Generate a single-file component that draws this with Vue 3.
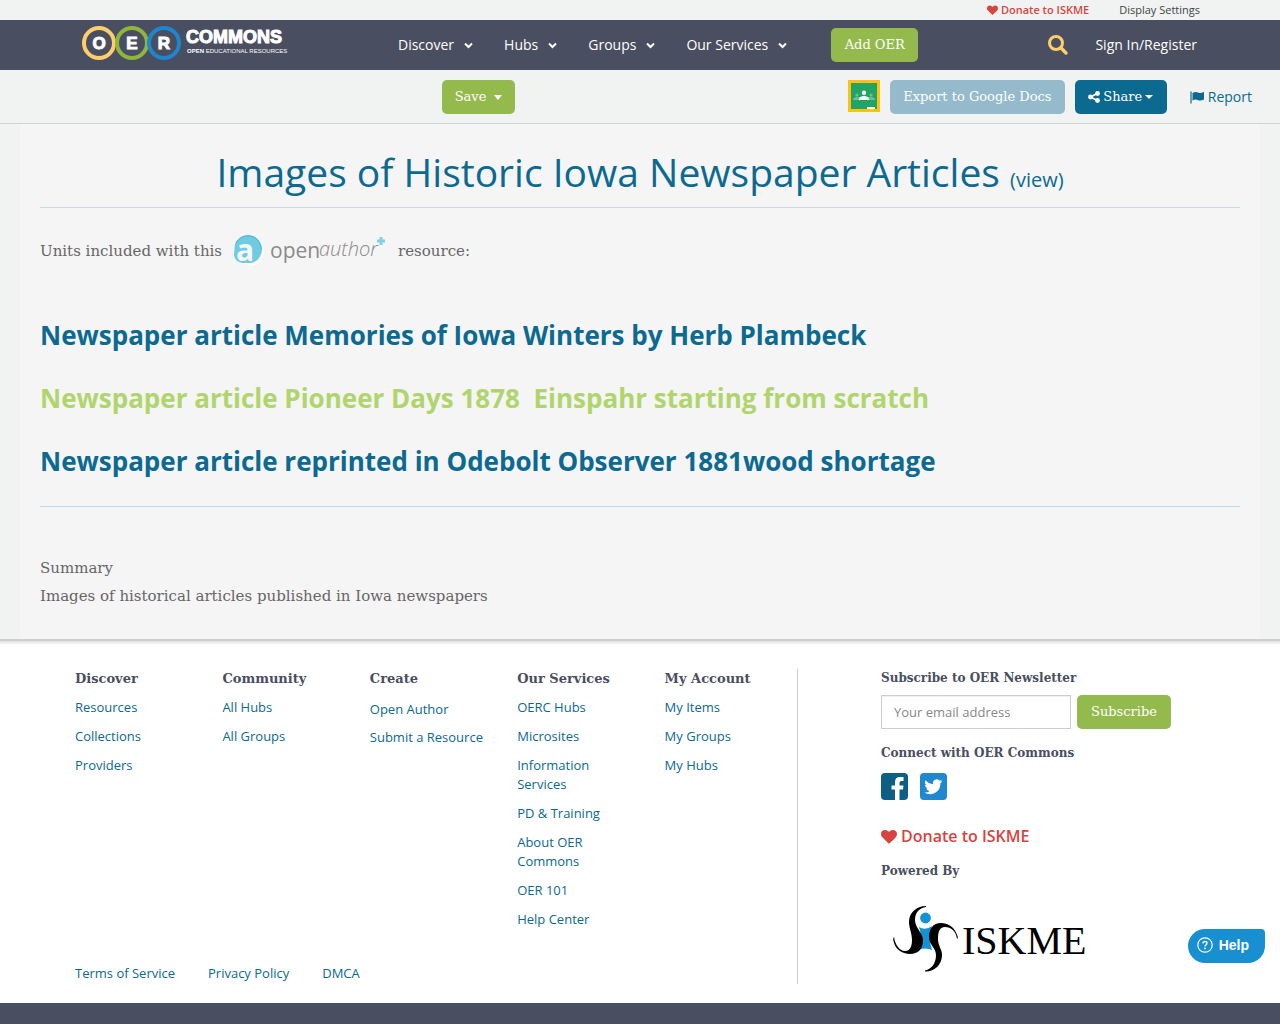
<script setup>
const menu = ['Discover', 'Hubs', 'Groups', 'Our Services']

const units = [
  { title: 'Newspaper article Memories of Iowa Winters by Herb Plambeck' },
  { title: 'Newspaper article Pioneer Days 1878\u00a0 Einspahr starting from scratch', active: true },
  { title: 'Newspaper article reprinted in Odebolt Observer 1881wood shortage' },
]

const columns = [
  { title: 'Discover', links: ['Resources', 'Collections', 'Providers'] },
  { title: 'Community', links: ['All Hubs', 'All Groups'] },
  { title: 'Create', links: ['Open Author', 'Submit a Resource'] },
  {
    title: 'Our Services',
    links: ['OERC Hubs', 'Microsites', 'Information Services', 'PD & Training', 'About OER Commons', 'OER 101', 'Help Center'],
  },
  { title: 'My Account', links: ['My Items', 'My Groups', 'My Hubs'] },
]

const legal = ['Terms of Service', 'Privacy Policy', 'DMCA']
</script>

<template>
  <div class="page">
    <div class="topbar">
      <a href="#" class="donate">
        <svg class="heart" viewBox="0 0 1792 1600" width="11" height="10" aria-hidden="true">
          <path d="M896 1600q-26 0-44-18L228 980q-10-8-27-26T145 888 78 793 23 677 0 540Q0 320 127 196T478 72q62 0 126 22t120 58 96 69 76 69q36-36 76-69t96-69 120-58 126-22q224 0 351 124t127 344q0 221-229 450l-623 600q-18 18-44 18z" />
        </svg>
        Donate to ISKME
      </a>
      <a href="#" class="display">Display Settings</a>
    </div>

    <header class="navbar">
      <a href="#" class="logo" aria-label="OER Commons">
        <svg width="208" height="36" viewBox="0 0 208 36">
          <g fill="none" stroke-width="4">
            <circle cx="17" cy="18" r="15" stroke="#fdce6b" />
            <circle cx="50" cy="18" r="15" stroke="#8fb53f" />
            <circle cx="82" cy="18" r="15" stroke="#1d86cd" />
          </g>
          <g class="logo-letters" text-anchor="middle">
            <text x="17" y="24">O</text>
            <text x="50" y="24">E</text>
            <text x="82" y="24">R</text>
          </g>
          <text class="logo-name" x="104" y="18">COMMONS</text>
          <text class="logo-tag" x="105" y="28"><tspan font-weight="700">OPEN</tspan> EDUCATIONAL RESOURCES</text>
        </svg>
      </a>
      <nav class="menu">
        <a v-for="item in menu" :key="item" href="#">
          {{ item }}
          <svg width="9" height="7" viewBox="0 0 9 7" aria-hidden="true">
            <path d="M1 1.5l3.5 3.5L8 1.5" fill="none" stroke="#fff" stroke-width="2" />
          </svg>
        </a>
      </nav>
      <button type="button" class="btn green add">Add OER</button>
      <div class="account">
        <a href="#" aria-label="Search" class="search">
          <svg width="20" height="20" viewBox="0 0 20 20">
            <circle cx="8" cy="8" r="6.5" fill="none" stroke="#fdce6b" stroke-width="3" />
            <path d="M12.8 12.8L18 18" stroke="#fdce6b" stroke-width="3.4" stroke-linecap="round" />
          </svg>
        </a>
        <a href="#">Sign In/Register</a>
      </div>
    </header>

    <div class="toolbar">
      <button type="button" class="btn green save">Save <i class="caret"></i></button>
      <div class="actions">
        <a href="#" class="classroom" aria-label="Google Classroom">
          <svg width="32" height="32" viewBox="0 0 32 32">
            <path fill="#ffc112" d="M0 0h32v32H0z" />
            <path fill="#21a465" d="M3 3h26v26H3z" />
            <g fill="#69c297">
              <circle cx="9" cy="15" r="1.6" />
              <circle cx="23" cy="15" r="1.6" />
              <path d="M5 20v-1q1-2 4-2t4 2v1zM19 20v-1q1-2 4-2t4 2v1z" />
            </g>
            <circle cx="16" cy="12.8" r="2.2" fill="#fff" />
            <path fill="#fff" d="M11 20v-1.5q1-2.500 5-2.500t5 2.500V20zM19 27h8v2h-8z" />
          </svg>
        </a>
        <button type="button" class="btn export">Export to Google Docs</button>
        <button type="button" class="btn share">
          <svg width="12" height="12" viewBox="0 0 12 12" aria-hidden="true">
            <path d="M9.500 2.300L2.700 6l6.800 3.700" fill="none" stroke="#fff" stroke-width="1.6" />
            <g fill="#fff"><circle cx="9.5" cy="2.5" r="2.4" /><circle cx="2.5" cy="6" r="2.4" /><circle cx="9.5" cy="9.5" r="2.4" /></g>
          </svg>
          <span>Share</span>
          <i class="caret"></i>
        </button>
        <a href="#" class="report">
          <svg width="15" height="13" viewBox="0 0 15 13" aria-hidden="true">
            <path d="M1 0.5V12.5" stroke="#0c6990" stroke-width="1.2" />
            <path fill="#0c6990" d="M2.500 2Q5.500 0 8.500 1.700 10.800 2.600 14 .8V8.500Q10.800 10.300 8 9.200 5.500 7.800 2.500 9.500z" />
          </svg>
          Report
        </a>
      </div>
    </div>

    <main class="content">
      <h1>Images of Historic Iowa Newspaper Articles <a href="#">(view)</a></h1>
      <p class="included">
        <span>Units included with this</span>
        <svg class="openauthor" width="152" height="32" viewBox="0 0 152 32" role="img" aria-label="openauthor">
          <path fill="#fff" d="M2 11C4 4 10 1 16 2c8 1 14 7 14 14 0 8-7 15-14 15l-4-2C5 30 0 25 2 19z" />
          <path fill="#6ecbe2" d="M1 9C3 4 8 0 14 0c8 0 14 7 14 14s-5 14-12 14H9C4 28 0 24 0 19z" />
          <path fill="none" stroke="#4fb5d3" d="M2 8C5 3 9 1 14 1c7 0 13 6 13 13" />
          <text class="mark" x="2" y="26">a</text>
          <text class="open" x="36" y="23">open</text>
          <text class="author" x="85" y="21">author</text>
          <path d="M147 2v8M143 6h8" stroke="#7ed0e6" stroke-width="3" />
        </svg>
        <span>resource:</span>
      </p>
      <h2 v-for="unit in units" :key="unit.title">
        <a href="#" :class="{ active: unit.active }">{{ unit.title }}</a>
      </h2>
      <dl class="summary">
        <dt>Summary</dt>
        <dd>Images of historical articles published in Iowa newspapers</dd>
      </dl>
    </main>

    <footer class="footer">
      <div class="links">
        <div class="columns">
          <section v-for="col in columns" :key="col.title" :class="{ compact: col.title === 'Create' }">
            <h3>{{ col.title }}</h3>
            <ul>
              <li v-for="link in col.links" :key="link"><a href="#">{{ link }}</a></li>
            </ul>
          </section>
        </div>
        <div class="legal">
          <a v-for="item in legal" :key="item" href="#">{{ item }}</a>
        </div>
      </div>
      <div class="connect">
        <form @submit.prevent>
          <label for="email">Subscribe to OER Newsletter</label>
          <div class="field">
            <input id="email" type="email" placeholder="Your email address" />
            <button type="submit" class="btn green subscribe">Subscribe</button>
          </div>
        </form>
        <h4>Connect with OER Commons</h4>
        <div class="social">
          <a href="#" aria-label="Facebook">
            <svg width="27" height="27" viewBox="0 0 27 27">
              <rect width="27" height="27" rx="4" fill="#0d5f85" />
              <path fill="#fff" d="M14 27V16.500h-3.500v-4H14V9q0-5 5-5h3.500v4h-2.300q-1.700 0-1.700 1.600v2.900h4l-.5 4h-3.500V27z" />
            </svg>
          </a>
          <a href="#" aria-label="Twitter">
            <svg width="27" height="27" viewBox="0 0 27 27">
              <rect width="27" height="27" rx="4" fill="#1f88ce" />
              <path fill="#fff" transform="translate(4.500 4.500) scale(.75)" d="M23.600 4.900c-.9.400-1.800.6-2.800.8 1-.6 1.800-1.600 2.200-2.700-1 .6-2 1-3.100 1.200a4.900 4.900 0 0 0-8.400 4.500C7.400 8.500 3.800 6.600 1.400 3.600a4.900 4.900 0 0 0 1.500 6.600c-.8 0-1.600-.2-2.200-.6v.1c0 2.400 1.700 4.400 3.900 4.800-.7.200-1.500.2-2.200.1.600 2 2.400 3.400 4.600 3.400A9.900 9.900 0 0 1-.3 20a14 14 0 0 0 21.500-12.400c1-.7 1.800-1.600 2.400-2.700z" />
            </svg>
          </a>
        </div>
        <a href="#" class="donate big">
          <svg class="heart" viewBox="0 0 1792 1600" width="16" height="15" aria-hidden="true">
            <path d="M896 1600q-26 0-44-18L228 980q-10-8-27-26T145 888 78 793 23 677 0 540Q0 320 127 196T478 72q62 0 126 22t120 58 96 69 76 69q36-36 76-69t96-69 120-58 126-22q224 0 351 124t127 344q0 221-229 450l-623 600q-18 18-44 18z" />
          </svg>
          Donate to ISKME
        </a>
        <h4>Powered By</h4>
        <a href="#" class="iskme" aria-label="ISKME">
          <svg width="194" height="66" viewBox="0 0 194 66">
            <path fill="#1592d2" d="M26 21Q32 25 39 20 35 32 39 44 32 41 25 44 30 32 26 21z" />
            <circle cx="32.5" cy="12" r="5.4" fill="#1592d2" />
            <path d="M33 0C23 0 16 7 16 16c0 6 3 11 3 18 0 8-3 11-7 11C7 45 2 39 1 31 0 32 0 34 .5 35 2 43 9 48 17 48c8 0 13-5 13-14 0-7-8-12-8-20C22 7 26 2 33 1z" />
            <path d="M32 65.500C41 66 49 59 49 49c0-6-4-9-4-16 0-8 2-12 7-12 6 0 11 4 12 12 1-1 1-2 .5-3C62 22 56 17 48 17 40 17 36 23 36 31c0 8 7 11 7 18 0 8-4 14-11 15.500z" />
            <text x="69" y="48">ISKME</text>
          </svg>
        </a>
      </div>
    </footer>
    <div class="base"></div>

    <button type="button" class="help">
      <svg width="16" height="16" viewBox="0 0 16 16" aria-hidden="true">
        <circle cx="8" cy="8" r="7.2" fill="none" stroke="#fff" stroke-width="1.2" />
        <path d="M6 6.500q0-2 2-2t2 1.800q0 1-1 1.600T8 9.400" fill="none" stroke="#fff" stroke-width="1.3" />
        <circle cx="8" cy="11.4" r=".9" fill="#fff" />
      </svg>
      Help
    </button>
  </div>
</template>

<style>
body {
  background: #f0f3f2;
}
</style>

<style scoped>
.page {
  font: 14px/20px "Open Sans", sans-serif;
  color: #666;
  min-height: 100vh;
  display: flex;
  flex-direction: column;
}
a {
  color: #0c6990;
  text-decoration: none;
}
h1, h2, h3, h4, p, ul, dl, dd {
  margin: 0;
  padding: 0;
}
svg {
  display: block;
  flex: none;
  overflow: visible;
}

.topbar {
  display: flex;
  justify-content: flex-end;
  gap: 30px;
  height: 20px;
  padding-right: 80px;
  font-size: 11px;
}
.display {
  color: #444;
}
.donate {
  display: flex;
  align-items: center;
  gap: 3px;
  color: #d64541;
  font-weight: 600;
}
.heart {
  fill: #d64541;
}

.navbar {
  display: flex;
  align-items: center;
  height: 50px;
  padding: 0 83px 0 82px;
  background: #494e60;
}
.logo {
  margin: 0 108px 5px 0;
}
.logo text {
  fill: #fff;
  font-family: "Liberation Sans", sans-serif;
}
.logo-letters {
  font-size: 17px;
  font-weight: 700;
  stroke: #fff;
}
.logo .logo-name {
  font-size: 18px;
  font-weight: 700;
  stroke: #fff;
}
.logo .logo-tag {
  font-size: 6px;
}
.menu {
  display: flex;
  gap: 31px;
}
.menu a {
  display: flex;
  align-items: center;
  gap: 10px;
  color: #fff;
}
.btn {
  display: inline-flex;
  align-items: center;
  justify-content: center;
  height: 34px;
  padding: 0 13px;
  border: 0;
  border-radius: 5px;
  color: #fff;
  font: 13px/20px "DejaVu Serif", serif;
  white-space: nowrap;
}
.green {
  background: #94ba4d;
}
.add {
  width: 87px;
  margin-left: 44px;
}
.account {
  display: flex;
  align-items: center;
  gap: 27px;
  margin-left: auto;
}
.account a {
  color: #fff;
}

.toolbar {
  display: flex;
  justify-content: space-between;
  height: 54px;
  padding: 10px 28px 0 442px;
  box-sizing: border-box;
  border-bottom: 1px solid #cfd3d2;
}
.save {
  width: 73px;
  gap: 8px;
}
.caret {
  border: 4px solid transparent;
  border-top-color: #fff;
  border-bottom: 0;
}
.save .caret {
  border-width: 5px 4px 0;
}
.actions {
  display: flex;
  gap: 10px;
}
.export {
  width: 175px;
  background: #94bacb;
}
.share {
  width: 92px;
  gap: 3px;
  background: #0c6990;
}
.report {
  display: flex;
  align-items: center;
  gap: 3px;
  height: 34px;
  margin-left: 13px;
}

.content {
  margin: 0 20px;
  padding: 0 20px 29px;
  background: #f5f5f5;
  font: 15px/28px "DejaVu Serif", serif;
}
h1 {
  padding: 20px 0 7px;
  border-bottom: 1px solid #c9dcdd;
  color: #0c6990;
  font: 400 39px/56px "Open Sans", sans-serif;
  text-align: center;
}
h1 a {
  font-size: 20px;
  line-height: 20px;
}
.included {
  display: flex;
  align-items: center;
  gap: 12px;
  height: 32px;
  margin: 27px 0 23px;
}
.openauthor text {
  font-family: "Open Sans", sans-serif;
  fill: #8a8a8a;
}
.openauthor .mark {
  fill: #f5f5f5;
  font-size: 30px;
  font-weight: 700;
}
.openauthor .open {
  font-size: 21px;
}
.openauthor .author {
  font-size: 20px;
  font-style: italic;
  font-weight: 300;
}
h2 {
  padding-top: 27px;
  font: 700 26px/36px "Open Sans", sans-serif;
}
h2 .active {
  color: #b0d56c;
}
.summary {
  margin-top: 27px;
  padding-top: 47px;
  border-top: 1px solid #bddde4;
}

.footer {
  display: flex;
  padding: 28px 75px 19px;
  border-top: 2px solid #cdcfcf;
  background: linear-gradient(#e0e0e0, #fff 4px);
  font-size: 13px;
  line-height: 19px;
}
.links {
  flex: 722 1 0;
  display: flex;
  flex-direction: column;
  justify-content: space-between;
  border-right: 1px solid #ccc;
}
.columns {
  display: grid;
  grid-template-columns: repeat(5, 1fr);
  gap: 15px;
}
h3, h4, label {
  display: block;
  color: #494e60;
  font: 700 13px/20px "DejaVu Serif", serif;
}
h4, label {
  font-size: 12px;
  line-height: 19px;
}
h3 {
  white-space: nowrap;
}
ul {
  display: flex;
  flex-direction: column;
  gap: 10px;
  margin-top: 9px;
  padding-right: 15px;
  list-style: none;
}
.compact ul {
  gap: 9px;
  margin-top: 11px;
  padding-right: 0;
}
.legal {
  display: flex;
  gap: 33px;
  margin-bottom: 1px;
}
.connect {
  flex: 324 1 0;
  padding-left: 83px;
}
.field {
  display: flex;
  gap: 6px;
  margin: 7px 0 15px;
}
input {
  width: 190px;
  height: 34px;
  box-sizing: border-box;
  padding: 0 12px;
  border: 1px solid #ccc;
  box-shadow: inset 0 1px 1px #0001;
  font: 13px "Open Sans", sans-serif;
}
input::placeholder {
  color: #888;
}
.subscribe {
  width: 94px;
}
.social {
  display: flex;
  gap: 12px;
  margin: 10px 0 24px;
}
.big {
  gap: 4px;
  margin-bottom: 14px;
  font-size: 16px;
  line-height: 24px;
}
.iskme {
  display: block;
  margin: 25px 0 12px 12px;
}
.iskme text {
  font: 40px "Liberation Serif", serif;
}
.base {
  flex: 1;
  min-height: 21px;
  background: #494e60;
}
.help {
  position: fixed;
  right: 15px;
  bottom: 61px;
  display: flex;
  align-items: center;
  gap: 6px;
  height: 34px;
  padding: 0 16px 2px 9px;
  border: 0;
  border-radius: 17px 4px 17px 17px;
  background: #178fd0;
  color: #fff;
  font: 700 14px "Liberation Sans", sans-serif;
}
</style>
